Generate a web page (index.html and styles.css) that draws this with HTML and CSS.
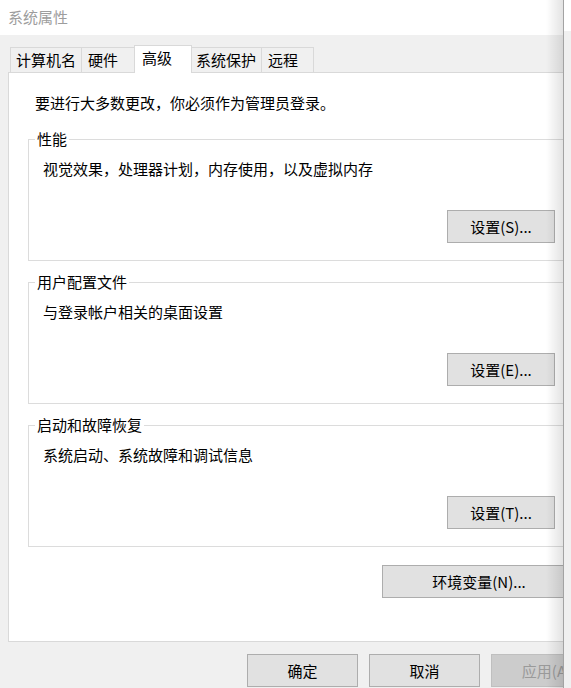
FILE: index.html
```html
<!DOCTYPE html>
<html lang="zh-CN">
<head>
<meta charset="utf-8">
<title>系统属性</title>
<link rel="stylesheet" href="styles.css">
</head>
<body>
<div class="window">
  <div class="titlebar">系统属性</div>

  <div class="tabs">
    <div class="tab tab-name">计算机名</div>
    <div class="tab tab-hw">硬件</div>
    <div class="tab tab-active">高级</div>
    <div class="tab tab-protect">系统保护</div>
    <div class="tab tab-remote">远程</div>
  </div>

  <div class="panel">
    <p class="intro">要进行大多数更改，你必须作为管理员登录。</p>

    <fieldset class="group">
      <legend>性能</legend>
      <p class="desc">视觉效果，处理器计划，内存使用，以及虚拟内存</p>
      <div class="group-actions"><button class="btn btn-group">设置(S)...</button></div>
    </fieldset>

    <fieldset class="group">
      <legend>用户配置文件</legend>
      <p class="desc">与登录帐户相关的桌面设置</p>
      <div class="group-actions"><button class="btn btn-group">设置(E)...</button></div>
    </fieldset>

    <fieldset class="group">
      <legend>启动和故障恢复</legend>
      <p class="desc">系统启动、系统故障和调试信息</p>
      <div class="group-actions"><button class="btn btn-group">设置(T)...</button></div>
    </fieldset>

    <div class="env-row"><button class="btn btn-env">环境变量(N)...</button></div>
  </div>

  <div class="dialog-buttons">
    <button class="btn btn-dialog">确定</button>
    <button class="btn btn-dialog">取消</button>
    <button class="btn btn-dialog" disabled>应用(A)</button>
  </div>
</div>

<!-- edge of the neighbouring window that overlaps this dialog -->
<div class="neighbour"></div>
</body>
</html>
```

FILE: styles.css
```css
html, body {
  margin: 0;
  padding: 0;
  overflow: hidden;
}

body {
  width: 571px;
  height: 688px;
  position: relative;
  background: #f0f0f0;
  font-family: "Noto Sans CJK SC", "Noto Sans", sans-serif;
  font-size: 15px;
  line-height: 20px;
  color: #000;
}

.window {
  width: 613px;
}

/* title bar */
.titlebar {
  height: 35px;
  background: #fff;
  color: #9d9d9d;
  padding-left: 8px;
  line-height: 34px;
}

/* tab strip */
.tabs {
  display: flex;
  align-items: flex-end;
  margin: 10px 0 0 10px;
  height: 27px;
}

.tab {
  box-sizing: border-box;
  height: 25px;
  border: 1px solid #d9d9d9;
  border-bottom: none;
  background: #f0f0f0;
  padding-left: 5px;
  line-height: 24px;
  white-space: nowrap;
}

.tab + .tab {
  margin-left: -1px;
}

.tab-name { width: 72px; }
.tab-hw { width: 54px; padding-left: 6px; }
.tab-active {
  width: 58px;
  height: 28px;
  margin-bottom: -1px;
  padding-left: 7px;
  background: #fff;
  line-height: 24px;
  position: relative;
  z-index: 1;
}
.tab-protect { width: 71px; padding-left: 4px; }
.tab-remote { width: 53px; padding-left: 6px; }

/* tab page */
.panel {
  box-sizing: border-box;
  height: 570px;
  margin: 0 17px 0 8px;
  background: #fff;
  border: 1px solid #d9d9d9;
  padding: 20px 19px 0 19px;
}

.intro {
  margin: 0 0 0 7px;
}

.group {
  margin: 16px 0 0 0;
  padding: 10px 20px 17px 0;
  border: 1px solid #dcdcdc;
  min-width: 0;
}

.group + .group {
  margin-top: 11px;
}

.group legend {
  margin-left: 6px;
  padding: 0 2px;
  line-height: 20px;
}

.desc {
  margin: 0 0 0 14px;
}

.group-actions {
  display: flex;
  justify-content: flex-end;
  margin-top: 31px;
}

.env-row {
  display: flex;
  justify-content: flex-end;
  margin-top: 18px;
}

/* push buttons */
.btn {
  box-sizing: border-box;
  height: 33px;
  margin: 0;
  padding: 0;
  background: #e1e1e1;
  border: 1px solid #adadad;
  border-radius: 0;
  font: inherit;
  color: #000;
  line-height: 28px;
}

.btn-group { width: 108px; }
.btn-env { width: 194px; }
.btn-dialog { width: 111px; }

.btn:disabled {
  background: #cccccc;
  border-color: #bfbfbf;
  color: #9a9a9a;
}

.dialog-buttons {
  display: flex;
  justify-content: flex-end;
  gap: 11px;
  margin: 12px 11px 0 0;
}

/* overlapping window edge with its shadow */
.neighbour {
  position: absolute;
  top: 0;
  left: 563px;
  width: 8px;
  height: 688px;
  border-left: 1px solid #a3a3a3;
  background: linear-gradient(#fff 0 31px, #f0f0f0 31px);
}

.neighbour::before {
  content: "";
  position: absolute;
  top: 0;
  right: 100%;
  width: 17px;
  height: 100%;
  margin-right: 1px;
  background: linear-gradient(to right, rgba(0, 0, 0, 0), rgba(0, 0, 0, 0.11));
}
```
